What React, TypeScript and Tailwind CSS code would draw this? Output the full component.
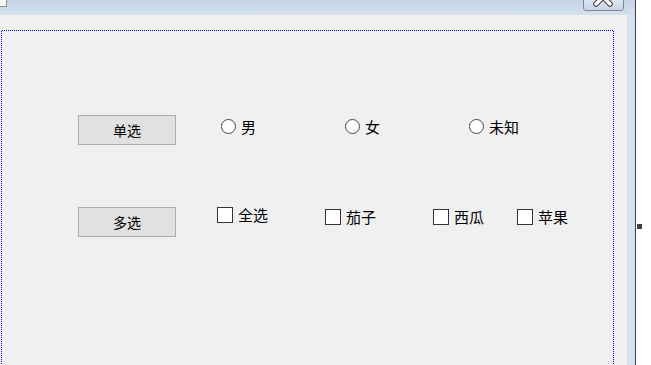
import React from "react";

const font = { fontFamily: '"Noto Sans CJK SC", "Noto Sans", sans-serif' };

function Radio({ label, w }: { label: string; w?: string }) {
  return (
    <div className={`flex items-center gap-[5px] ${w ?? ""}`}>
      <span className="w-[15px] h-[15px] rounded-full border border-[#444] bg-white shrink-0" />
      <span className="text-[15px] leading-[15px] text-black">{label}</span>
    </div>
  );
}

function Check({ label, w, mt }: { label: string; w?: string; mt?: string }) {
  return (
    <div className={`flex items-center gap-[5px] ${w ?? ""} ${mt ?? ""}`}>
      <span className="w-[16px] h-[16px] border border-[#333] bg-white shrink-0" />
      <span className="text-[15px] leading-[16px] text-black">{label}</span>
    </div>
  );
}

function Btn({ label }: { label: string }) {
  return (
    <button className="w-[98px] h-[30px] border border-[#adadad] bg-[#e1e1e1] text-[14px] text-black flex items-center justify-center shrink-0">
      {label}
    </button>
  );
}

export default function App() {
  return (
    <div className="w-[651px] h-[365px] flex bg-white overflow-hidden" style={font}>
      <div className="w-[635px] h-full flex flex-col">
        {/* title strip */}
        <div className="h-[15px] shrink-0 flex items-start bg-gradient-to-b from-[#c7d5e7] to-[#d4e0ee]">
          <div className="w-[7px] h-[7px] bg-[#f4f6f2] border-r border-b border-[#8c8c8c]" />
          <div className="ml-[576px] w-[41px] h-[12px] -mt-[1px] border border-[#7d8899] rounded-b-[3px] bg-gradient-to-b from-[#dde5ef] to-[#c9d5e4] overflow-hidden">
            <svg width="39" height="11" viewBox="0 0 39 11">
              <g strokeLinecap="round">
                <line x1="12" y1="-10" x2="26" y2="4" stroke="#3b3b3b" strokeWidth="5.5" />
                <line x1="26" y1="-10" x2="12" y2="4" stroke="#3b3b3b" strokeWidth="5.5" />
                <line x1="12" y1="-10" x2="26" y2="4" stroke="#ffffff" strokeWidth="3.5" />
                <line x1="26" y1="-10" x2="12" y2="4" stroke="#ffffff" strokeWidth="3.5" />
              </g>
            </svg>
          </div>
        </div>
        <div className="flex-1 min-h-0 flex">
          <div className="w-[627px] bg-[#f0f0f0] pt-[15px] pl-[1px]">
            <div className="w-[613px] h-[400px] p-[1px] bg-[conic-gradient(#0000ff_25%,#f0f0f0_0_50%,#0000ff_0_75%,#f0f0f0_0)] bg-[length:2px_2px]">
              <div className="w-full h-full bg-[#f0f0f0] flex flex-col">
                {/* row 1 */}
                <div className="flex items-start mt-[84px]">
                  <div className="ml-[76px]">
                    <Btn label="单选" />
                  </div>
                  <div className="ml-[45px] mt-[4px] flex">
                    <Radio label="男" w="w-[124px]" />
                    <Radio label="女" w="w-[124px]" />
                    <Radio label="未知" />
                  </div>
                </div>
                {/* row 2 */}
                <div className="flex items-start mt-[62px]">
                  <div className="ml-[76px]">
                    <Btn label="多选" />
                  </div>
                  <div className="ml-[41px] flex items-start">
                    <Check label="全选" w="w-[108px]" />
                    <Check label="茄子" w="w-[108px]" mt="mt-[2px]" />
                    <Check label="西瓜" w="w-[84px]" mt="mt-[2px]" />
                    <Check label="苹果" mt="mt-[2px]" />
                  </div>
                </div>
              </div>
            </div>
          </div>
          <div className="w-[8px] bg-[#d6e2f0]" />
        </div>
      </div>
      <div className="w-[1px] h-full bg-[#3c3c3c]" />
      <div className="flex-1 h-full">
        <div className="ml-[1px] mt-[224px] w-[5px] h-[5px] bg-[#404040]" />
      </div>
    </div>
  );
}
